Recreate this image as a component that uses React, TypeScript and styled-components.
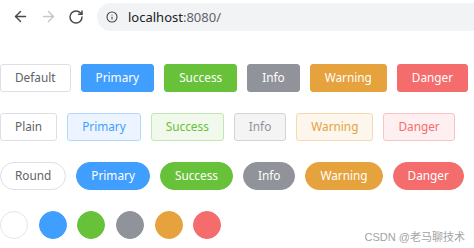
import styled, {createGlobalStyle, css} from 'styled-components';
import {ArrowLeft, ArrowRight, RotateCw, Info} from 'lucide-react';

type Kind = 'default' | 'primary' | 'success' | 'info' | 'warning' | 'danger';

const palette: Record<Kind, {main: string; light: string; border: string}> = {
    default: {main: '#ffffff', light: '#ffffff', border: '#dcdfe6'},
    primary: {main: '#409eff', light: '#ecf5ff', border: '#b3d8ff'},
    success: {main: '#67c23a', light: '#f0f9eb', border: '#c2e7b0'},
    info: {main: '#909399', light: '#f4f4f5', border: '#d3d4d6'},
    warning: {main: '#e6a23c', light: '#fdf6ec', border: '#f5dab1'},
    danger: {main: '#f56c6c', light: '#fef0f0', border: '#fbc4c4'},
};

const GlobalStyle = createGlobalStyle`
    body {
        margin: 0;
        background: #ffffff;
        font-family: "Noto Sans", "Open Sans", sans-serif;
    }
`;

const Page = styled.div`
    position: relative;
    width: 474px;
    height: 248px;
    overflow: hidden;
`;

const Toolbar = styled.header`
    display: flex;
    align-items: center;
    height: 33px;
    padding-left: 6px;
`;

const NavButton = styled.span<{$disabled?: boolean}>`
    display: flex;
    align-items: center;
    justify-content: center;
    width: 28px;
    height: 28px;
    color: ${(props) => (props.$disabled ? '#c4c7c9' : '#474747')};
`;

const AddressBar = styled.div`
    display: flex;
    align-items: center;
    gap: 10px;
    flex: 1;
    height: 28px;
    margin-left: 7px;
    padding-left: 9px;
    border-radius: 14px 0 0 14px;
    background: #f1f3f4;
    color: #5f6368;
    font-size: 13px;
`;

const Host = styled.span`
    color: #202124;
`;

const Content = styled.main`
    display: flex;
    flex-direction: column;
    gap: 21px;
    padding-top: 31px;
`;

const Row = styled.div<{$gap?: number}>`
    display: flex;
    align-items: center;
    gap: ${(props) => props.$gap ?? 10}px;
    height: 28px;
`;

const Button = styled.button<{$kind: Kind; $plain?: boolean; $round?: boolean}>`
    box-sizing: border-box;
    height: 28px;
    padding: 0 14px;
    border: 1px solid;
    border-radius: ${(props) => (props.$round ? '14px' : '3px')};
    font-family: "Noto Sans", "Open Sans", sans-serif;
    font-size: 11.8px;
    line-height: 1;
    white-space: nowrap;
    ${({$kind, $plain}) => {
        const c = palette[$kind];
        if ($kind === 'default') {
            return css`
                background: #ffffff;
                border-color: #dcdfe6;
                color: #606266;
            `;
        }
        if ($plain) {
            return css`
                background: ${c.light};
                border-color: ${c.border};
                color: ${c.main};
            `;
        }
        return css`
            background: ${c.main};
            border-color: ${c.main};
            color: #ffffff;
        `;
    }}
`;

const Circle = styled.span<{$kind: Kind}>`
    box-sizing: border-box;
    width: 28px;
    height: 28px;
    border-radius: 50%;
    background: ${(props) => palette[props.$kind].main};
    border: 1px solid
        ${(props) => (props.$kind === 'default' ? '#e4e6eb' : palette[props.$kind].main)};
`;

const Watermark = styled.div`
    position: absolute;
    right: 9px;
    bottom: 4px;
    font-family: "Liberation Sans", "Noto Sans CJK SC", sans-serif;
    font-size: 11px;
    color: #a3a3a3;
    text-shadow: 0 0 2px #ffffff;
`;

const kinds: Kind[] = ['primary', 'success', 'info', 'warning', 'danger'];
const labels: Record<Kind, string> = {
    default: 'Default',
    primary: 'Primary',
    success: 'Success',
    info: 'Info',
    warning: 'Warning',
    danger: 'Danger',
};

const App = () => {
    return (
        <Page>
            <GlobalStyle />
            <Toolbar>
                <NavButton>
                    <ArrowLeft size={17} strokeWidth={2} />
                </NavButton>
                <NavButton $disabled>
                    <ArrowRight size={17} strokeWidth={2} />
                </NavButton>
                <NavButton>
                    <RotateCw size={16} strokeWidth={2.2} />
                </NavButton>
                <AddressBar>
                    <Info size={12} strokeWidth={2.2} color="#474747" />
                    <span>
                        <Host>localhost</Host>:8080/
                    </span>
                </AddressBar>
            </Toolbar>

            <Content>
                <Row>
                    <Button $kind="default">Default</Button>
                    {kinds.map((k) => (
                        <Button key={k} $kind={k}>
                            {labels[k]}
                        </Button>
                    ))}
                </Row>
                <Row>
                    <Button $kind="default" $plain>
                        Plain
                    </Button>
                    {kinds.map((k) => (
                        <Button key={k} $kind={k} $plain>
                            {labels[k]}
                        </Button>
                    ))}
                </Row>
                <Row>
                    <Button $kind="default" $round>
                        Round
                    </Button>
                    {kinds.map((k) => (
                        <Button key={k} $kind={k} $round>
                            {labels[k]}
                        </Button>
                    ))}
                </Row>
                <Row $gap={10.7}>
                    <Circle $kind="default" />
                    {kinds.map((k) => (
                        <Circle key={k} $kind={k} />
                    ))}
                </Row>
            </Content>

            <Watermark>CSDN @老马聊技术</Watermark>
        </Page>
    );
};

export default App;
